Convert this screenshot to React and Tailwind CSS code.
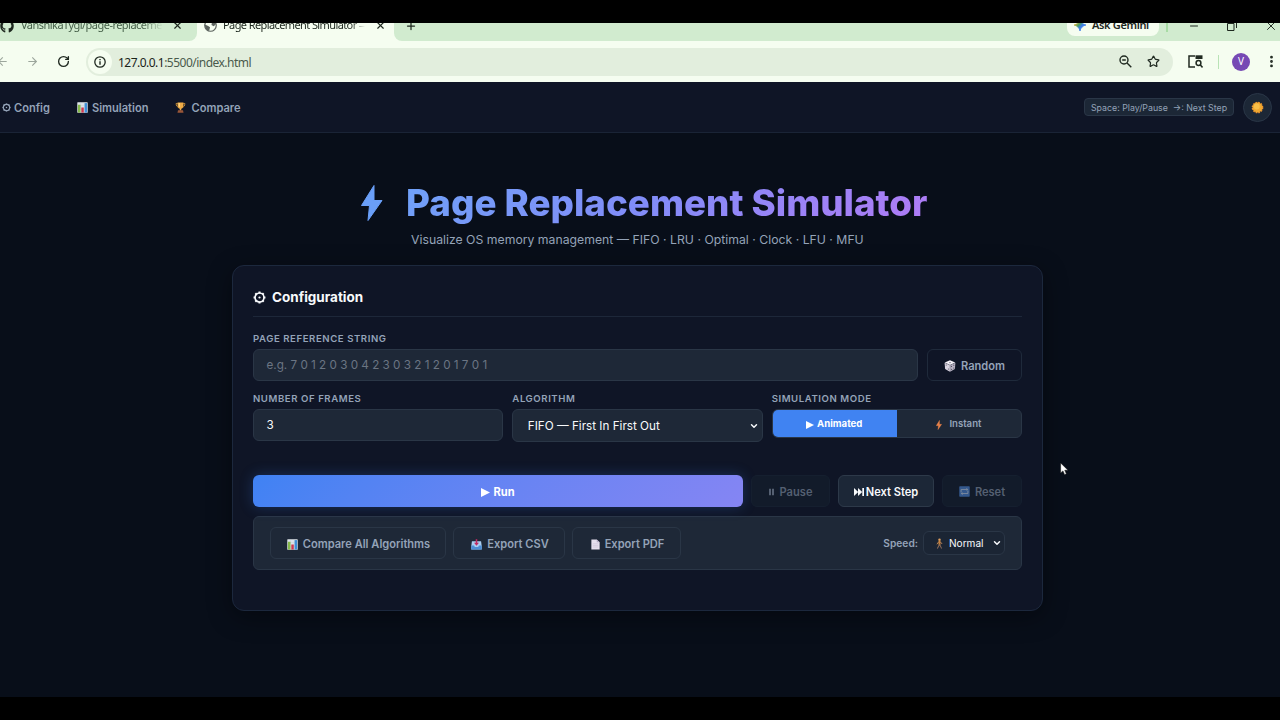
import React from "react";
import { FaGithub } from "react-icons/fa";
import { ArrowLeft, ArrowRight, RotateCw, Star, X, Plus, Minus, ChevronDown, EllipsisVertical } from "lucide-react";
import clsx from "clsx";

/* ---------- ICONS ---------- */
function ChartIcon({ className }) {
  return (
    <svg viewBox="0 0 12 12" className={className}>
      <rect x="0.3" y="0.3" width="11.4" height="11.4" rx="0.6" fill="#dfe5ea" />
      <path d="M0.5 4h11M0.5 8h11M4 0.5v11M8 0.5v11" stroke="#bcc8d2" strokeWidth="0.4" />
      <rect x="1" y="3" width="2.8" height="8.5" fill="#86b94a" />
      <rect x="4.7" y="6" width="2.7" height="5.5" fill="#cf3a50" />
      <rect x="8.3" y="1.2" width="2.7" height="10.3" fill="#3f8fd8" />
    </svg>
  );
}

function TrophyIcon({ className }) {
  return (
    <svg viewBox="0 0 12 12" className={className}>
      <path d="M3 1.6H1.2c0 2.5 1 3.8 2.8 4M9 1.6h1.8c0 2.5-1 3.8-2.8 4" fill="none" stroke="#d99a3a" strokeWidth="0.9" />
      <path d="M2.8 0.5h6.4v3.2c0 2-1.2 3.3-2.4 3.7v1.8H5.2V7.4C4 7 2.8 5.7 2.8 3.7z" fill="#f0ac46" />
      <path d="M4 1h1.3v5C4.3 5.4 4 4.5 4 3.6z" fill="#ffd98a" />
      <path d="M3.3 9h5.4l.6 2.7H2.7z" fill="#9a5638" />
    </svg>
  );
}

function GearIcon({ className }) {
  return (
    <svg viewBox="0 0 14 14" fill="none" stroke="currentColor" className={className}>
      <circle cx="7" cy="7" r="4.8" strokeWidth="1.7" />
      <circle cx="7" cy="7" r="1.2" fill="currentColor" stroke="none" />
      <path d="M7 .6v2M7 11.400v2M.6 7h2M11.400 7h2M2.500 2.500l1.300 1.300M10.200 10.200l1.300 1.300M2.500 11.500l1.300-1.300M10.200 3.800l1.300-1.300" strokeWidth="2.2" />
    </svg>
  );
}

function DiceIcon({ className }) {
  return (
    <svg viewBox="0 0 12 12" className={className}>
      <path d="M6 0.3l5.200 2.200L6 5 .8 2.500z" fill="#f4f1f7" />
      <path d="M.6 2.700L5.900 5.200v6.500L1.100 9z" fill="#d9d4e0" />
      <path d="M11.400 2.700L6.100 5.200v6.500L10.900 9z" fill="#b9b3c4" />
      <g fill="#544e60">
        <circle cx="6" cy="2.6" r="0.7" />
        <circle cx="2.2" cy="5" r="0.6" />
        <circle cx="4.4" cy="9" r="0.6" />
        <circle cx="7.5" cy="6.4" r="0.6" />
        <circle cx="9.8" cy="5.2" r="0.6" />
        <circle cx="7.6" cy="9.3" r="0.6" />
        <circle cx="9.8" cy="8" r="0.6" />
      </g>
    </svg>
  );
}

function BoltIcon({ className, fill }) {
  return (
    <svg viewBox="0 0 22 36" className={className}>
      <path d="M13 .5L.5 20.500h8L7 35.500 21 15.500h-8z" fill={fill} stroke={fill} strokeLinejoin="round" />
    </svg>
  );
}

function InboxIcon({ className }) {
  return (
    <svg viewBox="0 0 12 12" className={className}>
      <path d="M1 2.500h10l.7 5v4H.3v-4z" fill="#a9cdf0" />
      <path d="M.3 7.200h3l.9 1.600h3.600l.9-1.600h3v4.300H.3z" fill="#4d8ed4" />
      <path d="M6 .2v4.600" stroke="#c02a62" strokeWidth="1.7" />
      <path d="M3.300 4.200h5.400L6 7.400z" fill="#c02a62" />
    </svg>
  );
}

function FileIcon({ className }) {
  return (
    <svg viewBox="0 0 10 12" className={className}>
      <path d="M.4.400h6L9.600 3.600v8H.4z" fill="#e6e0ee" />
      <path d="M6.400.400v3.200h3.200z" fill="#b4aac4" />
      <path d="M2 5.200h6M2 7h6M2 8.800h6" stroke="#c9c0d6" strokeWidth="0.6" />
    </svg>
  );
}

function LoopIcon({ className }) {
  return (
    <svg viewBox="0 0 12 12" className={className}>
      <rect x=".3" y=".3" width="11.4" height="11.4" rx=".8" fill="#4b82cf" />
      <path d="M2.300 7V3.800h6.200M9.700 5v3.200H3.500" fill="none" stroke="#c4d4ea" strokeWidth="1" />
      <path d="M8 2.300l2.200 1.500L8 5.300zM4 6.700L1.800 8.200 4 9.700z" fill="#c4d4ea" />
    </svg>
  );
}

function WalkerIcon({ className }) {
  return (
    <svg viewBox="0 0 8 12" fill="none" strokeLinecap="round" className={className}>
      <circle cx="4" cy="1.6" r="1.4" fill="#e0a060" />
      <path d="M4 3.800v3.400" stroke="#c98038" strokeWidth="2.2" />
      <path d="M3 4.200L1.300 6.500M5 4.200l1.700 2" stroke="#d99a62" strokeWidth="0.9" />
      <path d="M3.800 7.500L1.700 11.300M4.300 7.500l1.900 3.800" stroke="#8a6a58" strokeWidth="1.2" />
    </svg>
  );
}

function PlayIcon({ className }) {
  return (
    <svg viewBox="0 0 9 9" className={className}>
      <path d="M0 0l9 4.500L0 9z" fill="currentColor" />
    </svg>
  );
}

function SkipIcon({ className }) {
  return (
    <svg viewBox="0 0 10 8" className={className}>
      <path d="M0 0l4.200 4L0 8zM4 0l4.200 4L4 8zM8.300 0H10v8H8.300z" fill="currentColor" />
    </svg>
  );
}

function SunIcon({ className }) {
  return (
    <svg viewBox="0 0 14 14" className={className}>
      <circle cx="7" cy="7" r="5.6" fill="none" stroke="#e8902c" strokeWidth="1.4" strokeDasharray="1.9 1.03" />
      <circle cx="7" cy="7" r="5.3" fill="#f0a830" />
      <circle cx="6.2" cy="6" r="3.2" fill="#f8be48" />
    </svg>
  );
}

function GlobeIcon({ className }) {
  return (
    <svg viewBox="0 0 14 14" className={className}>
      <circle cx="7" cy="7" r="6.2" fill="#f5fdf0" stroke="#5b625d" strokeWidth="1.3" />
      <path d="M1 6l3.500 1.500 2 1.500-1 4C2.500 12.500.8 9.500 1 6zM6 1.200c3-.6 6 1 7 4.300l-2.500 2.300L8 6.500 8.500 4.500 6 4z" fill="#5b625d" />
    </svg>
  );
}

function GeminiIcon({ className }) {
  return (
    <svg viewBox="0 0 12 12" className={className}>
      <defs>
        <linearGradient id="gemini" x1="0" y1="0" x2="1" y2="1">
          <stop offset="0.2" stopColor="#f0b429" />
          <stop offset="0.45" stopColor="#4a9c6a" />
          <stop offset="0.6" stopColor="#3b7de8" />
        </linearGradient>
      </defs>
      <path d="M6 0c.5 3 3 5.500 6 6-3 .5-5.500 3-6 6-.5-3-3-5.500-6-6 3-.5 5.500-3 6-6z" fill="url(#gemini)" stroke="url(#gemini)" strokeWidth="0.8" />
    </svg>
  );
}

/* ---------- BROWSER ---------- */
function TabStrip() {
  return (
    <div className="h-[18px] bg-[#f5fdf0] overflow-hidden flex items-end text-[#1d271e]">
      <div className="h-[31px] w-[197px] shrink-0 rounded-br-lg bg-[#d1ebcf] flex items-center">
        <FaGithub className="size-3.5 shrink-0" />
        <span className="ml-[7px] w-[142px] overflow-hidden whitespace-nowrap text-[11px] tracking-[-0.53px] text-[#47614a] [mask-image:linear-gradient(90deg,#000_85%,transparent)]">
          VanshikaTygi/page-replacement
        </span>
        <X className="ml-[9px] size-[11px]" strokeWidth={2.5} />
      </div>
      <div className="h-[31px] w-[197px] shrink-0 flex items-center">
        <GlobeIcon className="ml-[7px] size-[13px] shrink-0" />
        <span className="ml-1.5 w-[142px] overflow-hidden whitespace-nowrap text-[11px] tracking-[-0.6px] [mask-image:linear-gradient(90deg,#000_90%,transparent)]">
          Page Replacement Simulator — OS
        </span>
        <X className="ml-2.5 size-[11px]" strokeWidth={2.5} />
      </div>
      <div className="h-[31px] grow rounded-bl-lg bg-[#d1ebcf] flex items-center pl-[11px]">
        <Plus className="size-3" strokeWidth={2.5} />
        <div className="ml-auto w-[92px] h-6 mb-1 rounded-lg bg-[#f5fdf0] flex items-center gap-1.5 pl-[7px] pt-[3px]">
          <GeminiIcon className="size-3" />
          <span className="text-[11px] font-semibold tracking-[-0.35px] whitespace-nowrap">Ask Gemini</span>
        </div>
        <div className="ml-[7px] w-0.5 h-3 bg-[#a8dca5]" />
        <Minus className="ml-5 size-3" strokeWidth={2} />
        <svg viewBox="0 0 12 12" fill="none" stroke="currentColor" className="ml-[26px] size-3">
          <path d="M1.500 3.500h6.500v7H1.500zM4 1h6.500v7" />
        </svg>
        <X className="ml-[26px] mr-0.5 size-3.5" strokeWidth={1.6} />
      </div>
    </div>
  );
}

function AddressBar() {
  return (
    <div className="h-[41px] bg-[#f5fdf0] flex items-center overflow-hidden text-[#202a21]">
      <ArrowLeft className="-ml-1 size-[13px] shrink-0 text-[#9ca69c]" strokeWidth={2} />
      <ArrowRight className="ml-[17px] size-[13px] shrink-0 text-[#9ca69c]" strokeWidth={2} />
      <RotateCw className="ml-[18px] size-[13px] shrink-0" strokeWidth={2.5} />
      <div className="ml-4 w-[1087px] h-7 shrink-0 rounded-full bg-[#e2eedd] flex items-center pl-0.5">
        <div className="size-6 rounded-full bg-[#f5fdf0] flex items-center justify-center">
          <svg viewBox="0 0 12 12" fill="none" stroke="currentColor" className="size-3">
            <circle cx="6" cy="6" r="5.2" strokeWidth="1.3" />
            <path d="M6 5.300v3.500M6 2.900v1.400" strokeWidth="1.4" />
          </svg>
        </div>
        <span className="ml-[6px] pt-0.5 grow text-[12px] tracking-[-0.52px] text-[#4a5a4c]">
          <span className="text-[#1a241b]">127.0.0.1</span>:5500/index.html
        </span>
        <svg viewBox="0 0 13 13" fill="none" stroke="currentColor" strokeWidth="1.4" className="size-[13px]">
          <path d="M8 8l4.300 4.300M3.200 5h3.600" />
          <circle cx="5" cy="5" r="4" />
        </svg>
        <Star className="ml-[15px] mr-[13px] size-[13px]" strokeWidth={2.2} />
      </div>
      <svg viewBox="0 0 15 13" fill="none" stroke="currentColor" strokeWidth="1.5" className="ml-[15px] w-[15px] h-[13px] shrink-0">
        <path d="M7 12H1V1h6" />
        <path d="M7.500.300H14.500V4H7.500z" fill="currentColor" stroke="none" />
        <circle cx="10.5" cy="8" r="2.4" />
        <path d="M12.200 9.800l2.300 2.600" />
      </svg>
      <div className="ml-[15px] w-px h-3.5 shrink-0 bg-[#b9e3b6]" />
      <div className="ml-[13px] size-[18px] shrink-0 rounded-full bg-[#7649b4] text-white text-[10px] flex items-center justify-center">
        V
      </div>
      <EllipsisVertical className="ml-3.5 size-[15px] shrink-0" strokeWidth={2.5} />
    </div>
  );
}

/* ---------- APP ---------- */
function Navbar() {
  return (
    <nav className="h-[51px] bg-[#0f1526] border-b border-[#1a2436] flex items-center text-[11.1px] font-semibold text-[#94a3b8]">
      <a className="ml-0.5 pt-0.5 flex items-center gap-[3px]">
        <GearIcon className="size-[9px]" />
        Config
      </a>
      <a className="ml-[27px] pt-0.5 flex items-center gap-1">
        <ChartIcon className="size-[11px]" />
        Simulation
      </a>
      <a className="ml-[27px] pt-0.5 flex items-center gap-[5px]">
        <TrophyIcon className="size-[11px]" />
        Compare
      </a>
      <div className="ml-auto mr-2 flex items-center gap-[9px]">
        <span className="h-[18px] w-[150px] rounded border border-[#2a3647] bg-[#1c2736] pt-px flex items-center justify-center text-[8.8px] font-normal whitespace-pre">
          Space: Play/Pause  →: Next Step
        </span>
        <button className="size-[29px] rounded-full border border-[#2a3647] bg-[#1c2736] flex items-center justify-center">
          <SunIcon className="size-[13px]" />
        </button>
      </div>
    </nav>
  );
}

function Label({ children }) {
  return (
    <label className="block h-[11px] mb-[5px] text-[9.6px] leading-[11px] font-semibold tracking-[0.57px] text-[#94a3b8]">
      {children}
    </label>
  );
}

function GhostButton({ className, children }) {
  return (
    <button
      className={clsx(
        "h-8 rounded-md border flex items-center justify-center gap-[5px] text-[11.1px] font-semibold text-[#94a3b8]",
        className
      )}
    >
      {children}
    </button>
  );
}

function ConfigCard() {
  return (
    <section className="w-[811px] h-[346px] ml-[232px] mt-[17px] rounded-xl border border-[#1c283d] bg-[#0f1526] px-5 pt-[19px] shadow-[0_6px_24px_rgba(0,0,0,0.4)]">
      <h2 className="h-8 border-b border-[#1d2739] pb-1.5 flex items-center gap-1.5 text-[13.5px] font-bold text-slate-50">
        <GearIcon className="size-[13px]" />
        Configuration
      </h2>

      <div className="mt-4">
        <Label>PAGE REFERENCE STRING</Label>
        <div className="flex gap-[9px]">
          <div className="grow h-8 rounded-md border border-[#2a3646] bg-[#1e2837] px-[12.5px] pt-0.5 flex items-center text-[11.7px] text-[#6b7583]">
            e.g. 7 0 1 2 0 3 0 4 2 3 0 3 2 1 2 0 1 7 0 1
          </div>
          <GhostButton className="w-[95px] border-[#1f2a3b] pt-0.5">
            <DiceIcon className="size-3 -mt-px" />
            Random
          </GhostButton>
        </div>
      </div>

      <div className="mt-3 grid grid-cols-3 gap-[9px]">
        <div>
          <Label>NUMBER OF FRAMES</Label>
          <div className="h-8 rounded-md border border-[#2a3646] bg-[#1e2837] px-[12.5px] pt-0.5 flex items-center text-[11.7px] text-slate-50">
            3
          </div>
        </div>
        <div>
          <Label>ALGORITHM</Label>
          <div className="h-[33px] rounded-md border border-[#2a3646] bg-[#1e2837] pl-[14.5px] pr-[3px] flex items-center justify-between text-[11.7px] text-slate-50">
            <span className="pt-0.5">FIFO — First In First Out</span>
            <ChevronDown className="size-2.5" strokeWidth={3.5} />
          </div>
        </div>
        <div>
          <Label>SIMULATION MODE</Label>
          <div className="h-[29px] rounded-md border border-[#2a3646] bg-[#1e2837] overflow-hidden grid grid-cols-2 text-[9.6px]">
            <div className="-my-px -ml-px bg-[#4083f2] pt-0.5 flex items-center justify-center gap-[3px] font-bold text-white">
              <PlayIcon className="size-2" />
              Animated
            </div>
            <div className="pt-0.5 flex items-center justify-center gap-[7px] font-semibold text-[#94a3b8]">
              <BoltIcon className="w-1.5 h-2.5" fill="#e8824a" />
              Instant
            </div>
          </div>
        </div>
      </div>

      <div className="mt-[33px] flex gap-2 text-[11.1px] font-semibold">
        <button className="w-[490px] h-8 rounded-md bg-linear-135 from-[#3f82f3] to-[#8585f3] pt-0.5 flex items-center justify-center gap-[3px] font-bold text-white shadow-[0_0_14px_rgba(59,130,246,0.25)]">
          <PlayIcon className="size-[9px]" />
          Run
        </button>
        <button className="w-[79px] h-8 rounded-md border border-[#151f2f] bg-[#121b2a] pt-0.5 flex items-center justify-center gap-[6px] text-[#556072]">
          <svg viewBox="0 0 6 8" className="w-[5px] h-2">
            <path d="M0 0h2.400v8H0zM3.600 0H6v8H3.600z" fill="currentColor" />
          </svg>
          Pause
        </button>
        <button className="w-24 h-8 rounded-md border border-[#2d3949] bg-[#1c2737] pt-0.5 flex items-center justify-center gap-0.5 text-slate-50">
          <SkipIcon className="w-2.5 h-2" />
          Next Step
        </button>
        <button className="grow h-8 rounded-md border border-[#151f2f] bg-[#121b2a] pt-0.5 flex items-center justify-center gap-[5px] text-[#556072]">
          <LoopIcon className="size-[11px] -mt-px opacity-60" />
          Reset
        </button>
      </div>

      <div className="mt-[9px] h-[54px] rounded-md border border-[#2a3646] bg-[#1e2837] px-4 flex items-center gap-[7px]">
        <GhostButton className="w-44 border-[#2a3646] pt-0.5 pl-px">
          <ChartIcon className="size-[11px]" />
          Compare All Algorithms
        </GhostButton>
        <GhostButton className="w-28 border-[#2a3646] pt-0.5 pl-0.5">
          <InboxIcon className="size-[11px]" />
          Export CSV
        </GhostButton>
        <GhostButton className="w-[109px] border-[#2a3646] pt-0.5 pl-0.5">
          <FileIcon className="w-[9px] h-[11px]" />
          Export PDF
        </GhostButton>
        <span className="ml-auto -mr-[2px] pt-0.5 text-[10.2px] font-semibold text-[#94a3b8]">Speed:</span>
        <div className="w-[82px] h-6 rounded-md border border-[#2a3646] bg-[#1b2534] pl-[12px] pr-[2px] flex items-center text-[10.1px] text-slate-50">
          <WalkerIcon className="w-[7px] h-[11px]" />
          <span className="ml-1.5 grow pt-0.5">Normal</span>
          <ChevronDown className="size-2.5" strokeWidth={3.5} />
        </div>
      </div>
    </section>
  );
}

function Cursor() {
  return (
    <svg viewBox="0 0 10 15" className="absolute left-[1060px] top-[462px] w-[9px] h-[14px]">
      <path d="M.7.700v11.200l2.600-2.300 1.800 4.200 2-.9-1.800-4h3.600z" fill="#fff" stroke="#111" strokeWidth="0.6" />
    </svg>
  );
}

function App() {
  return (
    <div className="relative w-[1280px] h-[720px] overflow-hidden bg-black pt-[23px] font-[Inter,sans-serif]">
      <header className="font-['Noto_Sans',sans-serif]">
        <TabStrip />
        <AddressBar />
      </header>
      <Navbar />
      <main className="h-[564px] bg-[#080e19] overflow-hidden">
        <div className="pt-[45px] pl-[361px]">
          <h1 className="h-[50px] w-[570px] flex items-center whitespace-nowrap text-[36.75px] font-extrabold text-transparent bg-clip-text bg-linear-135 from-[#6ba5f8] via-[#818cf8] to-[#b07af5]">
            <BoltIcon className="w-[22px] h-9 mr-[23px] shrink-0" fill="#6a9ff8" />
            Page Replacement Simulator
          </h1>
        </div>
        <p className="mt-[3px] pt-[2px] ml-[411px] h-[17px] flex items-center text-[12.26px] text-[#94a3b8] whitespace-nowrap">
          Visualize OS memory management — FIFO · LRU · Optimal · Clock · LFU · MFU
        </p>
        <ConfigCard />
      </main>
      <Cursor />
    </div>
  );
}

export default App;
